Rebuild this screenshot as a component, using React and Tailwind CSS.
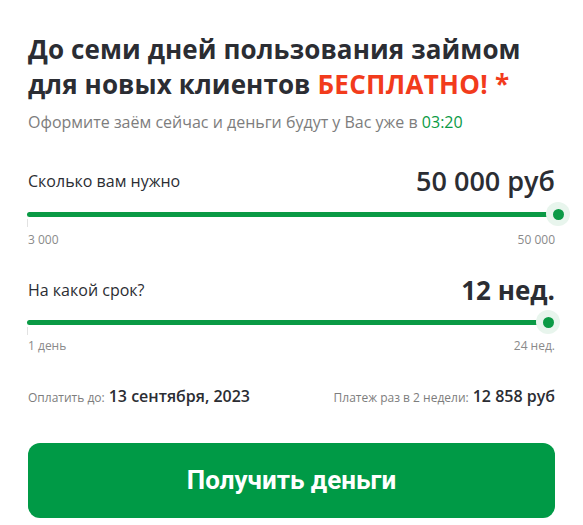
import React, { useState } from 'react';

const Slider = ({ label, value, valueClass, min, max, percent, trackRight, trackTop, labelsTop }) => (
  <div>
    <div className="flex h-[34px] items-center justify-between">
      <span className="text-[16px] leading-[20px] text-[#2b2d33]">{label}</span>
      <span className={valueClass}>{value}</span>
    </div>
    <div className={`relative h-[26px] ${trackTop} ${trackRight}`}>
      <div className="absolute left-[-1px] top-[11px] h-[5px] rounded-full bg-[#0a9a45]" style={{ width: `calc(${percent}% + 1px)` }} />
      <div className="absolute right-[-12px] top-[1px] h-[24px] w-[24px] rounded-full bg-[#e8f5ed]" />
      <div className="absolute right-[-5.5px] top-[8px] h-[11px] w-[11px] rounded-full bg-[#0a9a45]" />
      <div className="absolute left-[-1px] top-[18px] h-[8px] w-px bg-[#e2e2e2]" />
    </div>
    <div className={`flex justify-between text-[12px] leading-[16px] text-[#8a8a8a] ${labelsTop}`}>
      <span>{min}</span>
      <span>{max}</span>
    </div>
  </div>
);

export default function App() {
  const [amount] = useState(50000);

  return (
    <div className="min-h-[525px] w-[583px] bg-white font-['Open_Sans',sans-serif]">
      <div className="px-[28px] pt-[32px]">
        <h1 className="text-[26px] font-bold leading-[35px] tracking-[0.1px] text-[#2b2d33]">
          До семи дней пользования займом для новых клиентов{' '}
          <span className="tracking-[0.3px] text-[#f23b1c]">БЕСПЛАТНО! *</span>
        </h1>
        <p className="mt-[10px] text-[16px] leading-[20px] text-[#7d7d7d]">
          Оформите заём сейчас и деньги будут у Вас уже в <span className="text-[#0a9a45]">03:20</span>
        </p>

        <div className="mt-[32px]">
          <Slider
            label="Сколько вам нужно"
            value={`${amount.toLocaleString('ru-RU').replace(/\s/g, ' ')} руб`}
            valueClass="text-[27px] font-semibold leading-[34px] text-[#2b2d33]"
            min="3 000"
            max="50 000"
            percent={100}
            trackRight="mr-[-3px]"
            trackTop="mt-[3px]"
            labelsTop="mt-[5px]"
          />
        </div>

        <div className="mt-[25px]">
          <Slider
            label="На какой срок?"
            value="12 нед."
            valueClass="text-[26px] font-bold leading-[34px] text-[#2b2d33]"
            min="1 день"
            max="24 нед."
            percent={100}
            trackRight="mr-[7px]"
            trackTop="mt-[2px]"
            labelsTop="mt-[3px]"
          />
        </div>

        <div className="mt-[31px] flex h-[22px] items-center justify-between text-[#2b2d33]">
          <div className="flex items-baseline gap-[4px]">
            <span className="text-[12px] text-[#7d7d7d]">Оплатить до:</span>
            <span className="text-[16px] font-semibold">13 сентября, 2023</span>
          </div>
          <div className="flex items-baseline gap-[4px]">
            <span className="text-[12px] text-[#7d7d7d]">Платеж раз в 2 недели:</span>
            <span className="text-[16px] font-semibold">12 858 руб</span>
          </div>
        </div>

        <button className="mt-[36px] flex h-[75px] w-full items-center justify-center rounded-[12px] bg-[#009a46] font-['Roboto',sans-serif] text-[26px] font-bold text-white">
          Получить деньги
        </button>
      </div>
    </div>
  );
}
